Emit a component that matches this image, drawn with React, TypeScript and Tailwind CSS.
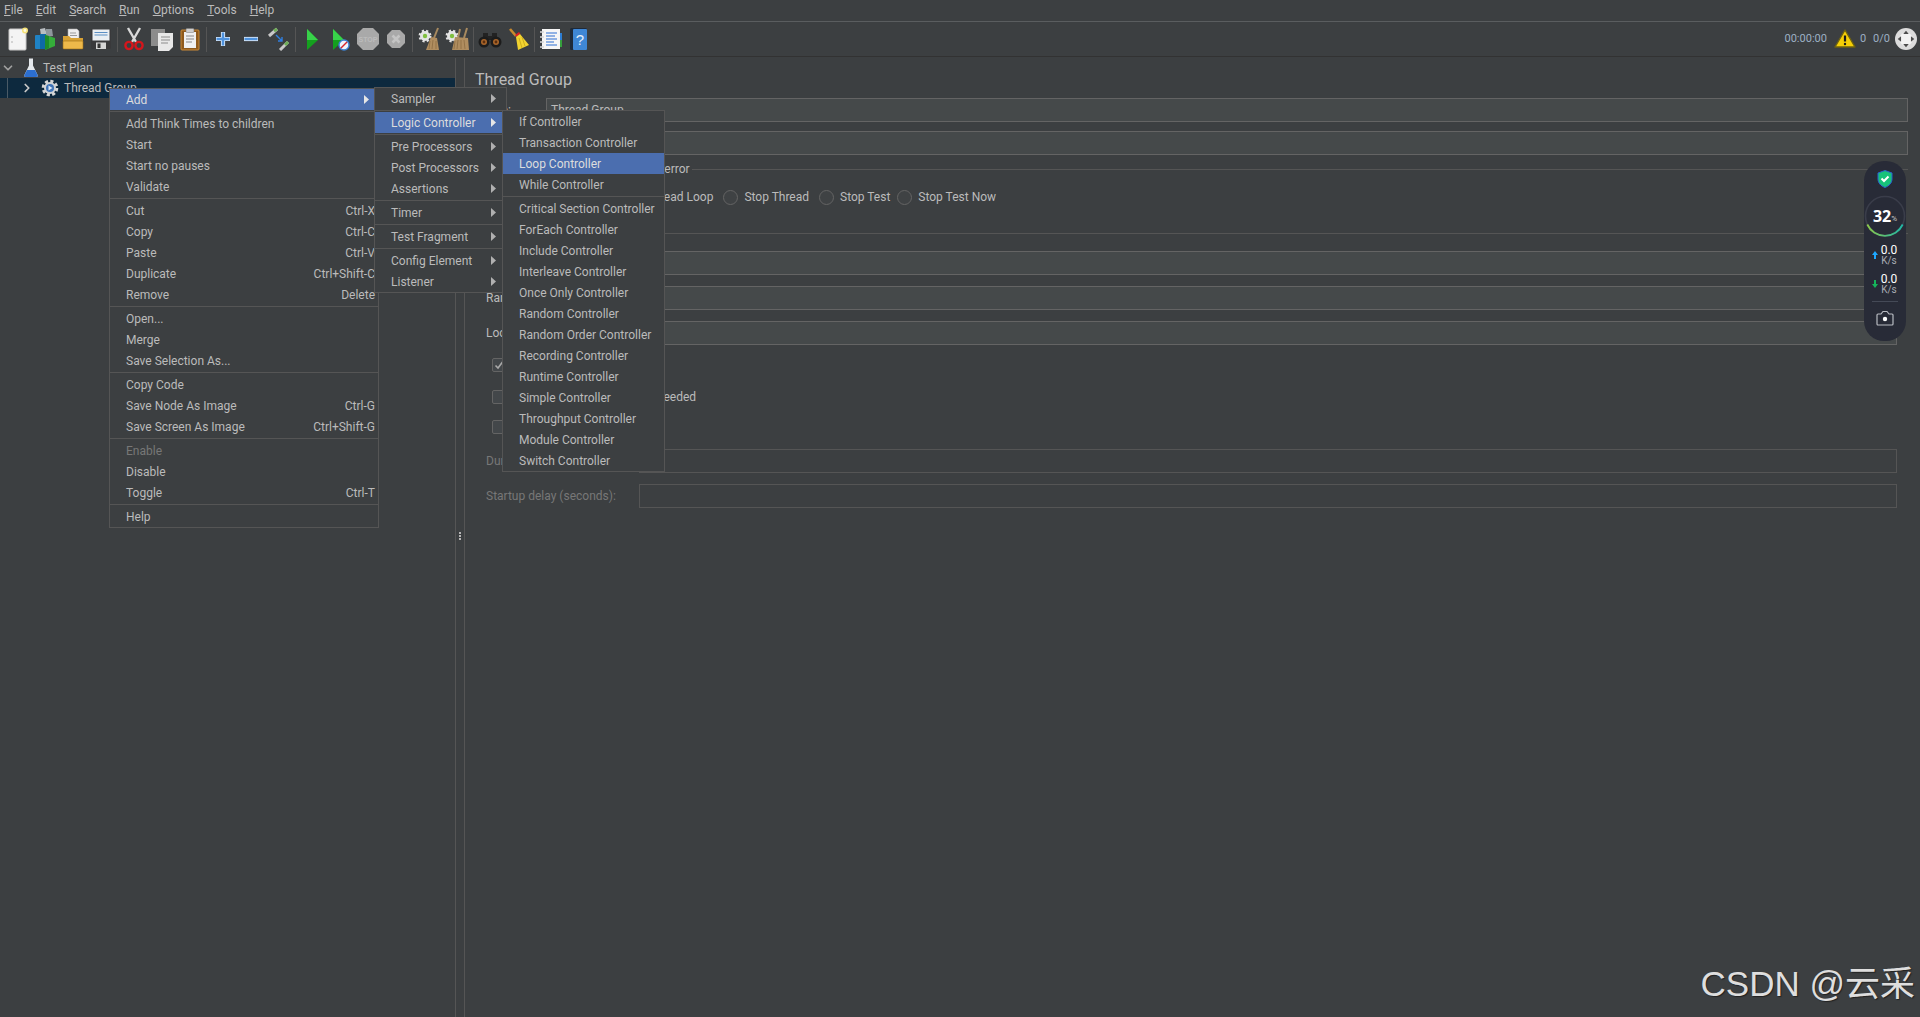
import React from 'react';
import { ChevronDown, ChevronRight } from 'lucide-react';

const NewIcon = () => (
  <svg width="24" height="24" viewBox="0 0 24 24">
    <rect x="4" y="2" width="17" height="21" rx="1" fill="#f4f4f4" stroke="#c9c9c9" />
    <circle cx="7" cy="10" r="0.7" fill="#999" />
    <circle cx="7" cy="15" r="0.7" fill="#999" />
    <circle cx="20" cy="3.5" r="3" fill="#f5e27a" />
    <circle cx="20" cy="3.5" r="1.4" fill="#fffbe0" />
  </svg>
);

const TemplatesIcon = () => (
  <svg width="24" height="24" viewBox="0 0 24 24">
    <path d="M7 2l5-1 2 7-6 1z" fill="#b9bec2" />
    <path d="M13 2l6 0 1 7-7 1z" fill="#8f979c" />
    <rect x="2" y="8" width="7" height="14" rx="1" fill="#1f82c4" />
    <rect x="7" y="7" width="6" height="15" fill="#0e6aa6" />
    <path d="M12 8l10 3v8l-10 4z" fill="#35ad3a" />
    <path d="M12 8l4 1v12l-4 2z" fill="#1e8c2a" />
  </svg>
);

const OpenIcon = () => (
  <svg width="24" height="24" viewBox="0 0 24 24">
    <path d="M7 2h9l2 2v9H7z" fill="#eee" stroke="#aaa" strokeWidth="0.6" />
    <path d="M9 6h6M9 8.5h7" stroke="#999" />
    <path d="M2 9h6l2 2h12v10a1 1 0 0 1-1 1H3a1 1 0 0 1-1-1z" fill="#d9a233" />
    <path d="M2 14h20v7a1 1 0 0 1-1 1H3a1 1 0 0 1-1-1z" fill="#eeb94a" stroke="#9a6d16" strokeWidth="0.6" />
  </svg>
);

const SaveIcon = () => (
  <svg width="24" height="24" viewBox="0 0 24 24">
    <rect x="2" y="2" width="20" height="20" rx="1.5" fill="#39393b" />
    <rect x="3.5" y="2.5" width="17" height="11" fill="#e9eef2" />
    <path d="M5.5 5.5h13M5.5 8h13" stroke="#5b8fc4" />
    <rect x="7" y="15.5" width="10" height="6.5" fill="#d6d6d6" />
    <rect x="8.5" y="16.5" width="3" height="4.5" fill="#333" />
  </svg>
);

const CutIcon = () => (
  <svg width="24" height="24" viewBox="0 0 24 24">
    <path d="M6 1l8 14M18 1l-8 14" stroke="#d9d9d9" strokeWidth="2.4" />
    <circle cx="7" cy="18.5" r="3.6" fill="none" stroke="#d4161c" strokeWidth="2.4" />
    <circle cx="17" cy="18.5" r="3.6" fill="none" stroke="#d4161c" strokeWidth="2.4" />
  </svg>
);

const CopyIcon = () => (
  <svg width="24" height="24" viewBox="0 0 24 24">
    <rect x="1" y="2" width="14" height="17" fill="#8c8c8c" />
    <path d="M8 6h15v14l-4 4H8z" fill="#e8e8e8" />
    <path d="M11 10h9M11 13h9M11 16h7" stroke="#8c8c8c" />
  </svg>
);

const PasteIcon = () => (
  <svg width="24" height="24" viewBox="0 0 24 24">
    <rect x="3" y="3" width="18" height="20" rx="1" fill="#8f5a1c" stroke="#c98a38" />
    <rect x="6" y="5" width="12" height="16" fill="#f0f0f0" />
    <rect x="8" y="1.5" width="8" height="4" rx="1" fill="#cfcfcf" stroke="#777" strokeWidth="0.5" />
    <path d="M8 9h8M8 12h8M8 15h6" stroke="#888" />
  </svg>
);

const PlusIcon = () => (
  <svg width="24" height="24" viewBox="0 0 24 24">
    <path d="M12 5v14M5 12h14" stroke="#d8e8f8" strokeWidth="4.2" />
    <path d="M12 5.5v13M5.5 12h13" stroke="#4f93de" strokeWidth="2.4" />
  </svg>
);

const MinusIcon = () => (
  <svg width="24" height="24" viewBox="0 0 24 24">
    <path d="M5 12h14" stroke="#d8e8f8" strokeWidth="4.2" />
    <path d="M5.5 12h13" stroke="#4f93de" strokeWidth="2.4" />
  </svg>
);

const ToggleIcon = () => (
  <svg width="24" height="24" viewBox="0 0 24 24">
    <path d="M2 9l8-7" stroke="#c9c9c9" strokeWidth="3" />
    <path d="M7 4l3-2" stroke="#6fae57" strokeWidth="3" />
    <path d="M13 23l8-8" stroke="#c9c9c9" strokeWidth="3" />
    <path d="M18 18l3-3" stroke="#6fae57" strokeWidth="3" />
    <path d="M9 8l6 6M15 10v4h-4" stroke="#2f7fe0" strokeWidth="1.4" fill="none" />
  </svg>
);

const StartIcon = () => (
  <svg width="24" height="24" viewBox="0 0 24 24">
    <path d="M7 2l11 11-11 10z" fill="#14a01e" />
    <path d="M7 2l11 11H7z" fill="#38d24a" />
  </svg>
);

const StartNoPauseIcon = () => (
  <svg width="24" height="24" viewBox="0 0 24 24">
    <path d="M5 2l11 11-11 10z" fill="#14a01e" />
    <path d="M5 2l11 11H5z" fill="#38d24a" />
    <circle cx="16" cy="18" r="5" fill="#eef4fb" stroke="#3c83d6" strokeWidth="1.4" />
    <path d="M13 21l6-6" stroke="#d6262c" strokeWidth="1.4" />
  </svg>
);

const StopIcon = () => (
  <svg width="24" height="24" viewBox="0 0 24 24">
    <path d="M7 1h10l6 6v10l-6 6H7l-6-6V7z" fill="#a9a9a9" />
    <text x="12" y="14.5" textAnchor="middle" fontSize="7" fontWeight="700" fill="#bcbcbc" fontFamily="Liberation Sans, sans-serif">STOP</text>
  </svg>
);

const ShutdownIcon = () => (
  <svg width="24" height="24" viewBox="0 0 24 24">
    <path d="M8 3h8l5 5v8l-5 5H8l-5-5V8z" fill="#a9a9a9" />
    <path d="M8.5 8.5l7 7M15.5 8.5l-7 7" stroke="#c4c4c4" strokeWidth="2.6" />
  </svg>
);

const ClearIcon = () => (
  <svg width="24" height="24" viewBox="0 0 24 24">
    <circle cx="8" cy="9" r="5" fill="#e4e4e4" stroke="#e4e4e4" strokeWidth="3" strokeDasharray="2 2" />
    <circle cx="8" cy="9" r="2.2" fill="#7fbf3f" />
    <path d="M21 1l-4 10" stroke="#a88a5f" strokeWidth="2" />
    <path d="M14 10l6 1 2 12H9z" fill="#b08d5f" />
    <path d="M13 14l-1 8M16 13l-1 9M19 14l0 8" stroke="#86673e" strokeWidth="0.7" />
  </svg>
);

const ClearAllIcon = () => (
  <svg width="24" height="24" viewBox="0 0 24 24">
    <circle cx="7" cy="9" r="5" fill="#e4e4e4" stroke="#e4e4e4" strokeWidth="3" strokeDasharray="2 2" />
    <circle cx="7" cy="9" r="2.2" fill="#7fbf3f" />
    <path d="M15 2l-2 9M22 1l-3 10" stroke="#a88a5f" strokeWidth="2" />
    <path d="M10 10l13 1 1 12H7z" fill="#b08d5f" />
    <path d="M10 14l-1 8M13 13l-1 9M16 13v9M19 13l1 9" stroke="#86673e" strokeWidth="0.7" />
  </svg>
);

const BinocularsIcon = () => (
  <svg width="24" height="24" viewBox="0 0 24 24">
    <path d="M5 6h5v6H5zM14 6h5v6h-5zM10 9h4v4h-4z" fill="#222" />
    <circle cx="6" cy="15" r="5.5" fill="#1c1c1c" />
    <circle cx="18" cy="15" r="5.5" fill="#1c1c1c" />
    <circle cx="6" cy="15" r="3" fill="#a8652a" />
    <circle cx="18" cy="15" r="3" fill="#a8652a" />
    <circle cx="6" cy="15" r="1.4" fill="#5a2f10" />
    <circle cx="18" cy="15" r="1.4" fill="#5a2f10" />
  </svg>
);

const BroomIcon = () => (
  <svg width="24" height="24" viewBox="0 0 24 24">
    <path d="M4 2l6 7" stroke="#c98a2e" strokeWidth="2.6" />
    <path d="M9 8l4-3 1.5 2-4 3z" fill="#d81f26" />
    <path d="M10 10l4-3 9 11-11 5z" fill="#f1d330" />
    <path d="M13 11l3 10M16 10l3 9" stroke="#c4a418" strokeWidth="0.8" />
  </svg>
);

const LogIcon = () => (
  <svg width="24" height="24" viewBox="0 0 24 24">
    <rect x="20" y="6" width="3" height="14" fill="#2d7dd2" />
    <rect x="20" y="13" width="3" height="7" fill="#35a03d" />
    <rect x="3" y="2" width="18" height="20" fill="#f6f6f6" />
    <path d="M7 6h11M7 9h9M7 12h11M7 15h8M7 18h11" stroke="#2d6fd2" strokeWidth="1.2" />
    <path d="M1 5h4M1 10h4M1 15h4M1 20h4" stroke="#d8d8d8" strokeWidth="1.6" />
  </svg>
);

const HelpIcon = () => (
  <svg width="24" height="24" viewBox="0 0 24 24">
    <rect x="3" y="1" width="17" height="22" rx="1.5" fill="#1e2a3a" />
    <rect x="6" y="2" width="14" height="21" rx="1" fill="#3f87d6" />
    <text x="13" y="18" textAnchor="middle" fontSize="15" fill="#e6f0fb" fontFamily="Liberation Sans, sans-serif">?</text>
  </svg>
);

const FlaskIcon = () => (
  <svg width="16" height="20" viewBox="0 0 16 20">
    <path d="M6 0.5h4v7l4.6 9.5a1.5 1.5 0 0 1-1.4 2H2.8A1.5 1.5 0 0 1 1.4 17L6 7.5z" fill="#e4e8ec" />
    <path d="M4 12h8l2.6 5a1.5 1.5 0 0 1-1.4 2H2.8A1.5 1.5 0 0 1 1.4 17z" fill="#2c6fd0" />
  </svg>
);

const GearIcon = () => (
  <svg width="20" height="20" viewBox="0 0 20 20">
    <circle cx="10" cy="10" r="6.6" fill="none" stroke="#d6d6d6" strokeWidth="3.4" strokeDasharray="3 2.2" />
    <circle cx="10" cy="10" r="6" fill="#cfd3d6" />
    <circle cx="10" cy="10" r="4" fill="#3f74b8" />
    <path d="M8.5 7.5l4 2.5-4 2.5z" fill="#dbe8f6" />
  </svg>
);

const WarningIcon = () => (
  <svg width="22" height="20" viewBox="0 0 22 20">
    <path d="M11 1l10 17H1z" fill="#f6cf06" stroke="#6e6210" strokeWidth="1.4" strokeLinejoin="round" />
    <path d="M11 6.5v6" stroke="#1c1c1c" strokeWidth="2.2" />
    <circle cx="11" cy="15" r="1.2" fill="#1c1c1c" />
  </svg>
);

const GlobeIcon = () => (
  <svg width="22" height="22" viewBox="0 0 20 20">
    <circle cx="10" cy="10" r="10" fill="#dcdcdc" />
    <circle cx="10" cy="10" r="6" fill="#f2f2f2" />
    <path d="M10 2.5l2.5 3h-5zM10 17.5l2.5-3h-5zM2.5 10l3-2.5v5zM17.5 10l-3-2.5v5z" fill="#4c4c4c" />
  </svg>
);

const ArrowRight = ({ active }: { active?: boolean }) => (
  <svg width="5" height="9" viewBox="0 0 5 9">
    <path d="M0 0l5 4.5L0 9z" fill={active ? '#e6e6e6' : '#b0b0b0'} />
  </svg>
);

const toolbarGroups = [
  [NewIcon, TemplatesIcon, OpenIcon, SaveIcon],
  [CutIcon, CopyIcon, PasteIcon],
  [PlusIcon, MinusIcon, ToggleIcon],
  [StartIcon, StartNoPauseIcon, StopIcon, ShutdownIcon],
  [ClearIcon, ClearAllIcon],
  [BinocularsIcon, BroomIcon],
  [LogIcon, HelpIcon]
];

const menuBar = [
  { key: 'F', rest: 'ile' },
  { key: 'E', rest: 'dit' },
  { key: 'S', rest: 'earch' },
  { key: 'R', rest: 'un' },
  { key: 'O', rest: 'ptions' },
  { key: 'T', rest: 'ools' },
  { key: 'H', rest: 'elp' }
];

type Item = { label: string; shortcut?: string; arrow?: boolean; active?: boolean; disabled?: boolean };

const mainMenu: Item[][] = [
  [{ label: 'Add', arrow: true, active: true }],
  [{ label: 'Add Think Times to children' }, { label: 'Start' }, { label: 'Start no pauses' }, { label: 'Validate' }],
  [
    { label: 'Cut', shortcut: 'Ctrl-X' },
    { label: 'Copy', shortcut: 'Ctrl-C' },
    { label: 'Paste', shortcut: 'Ctrl-V' },
    { label: 'Duplicate', shortcut: 'Ctrl+Shift-C' },
    { label: 'Remove', shortcut: 'Delete' }
  ],
  [{ label: 'Open...' }, { label: 'Merge' }, { label: 'Save Selection As...' }],
  [{ label: 'Copy Code' }, { label: 'Save Node As Image', shortcut: 'Ctrl-G' }, { label: 'Save Screen As Image', shortcut: 'Ctrl+Shift-G' }],
  [{ label: 'Enable', disabled: true }, { label: 'Disable' }, { label: 'Toggle', shortcut: 'Ctrl-T' }],
  [{ label: 'Help' }]
];

const addMenu: Item[][] = [
  [{ label: 'Sampler', arrow: true }],
  [{ label: 'Logic Controller', arrow: true, active: true }],
  [{ label: 'Pre Processors', arrow: true }, { label: 'Post Processors', arrow: true }, { label: 'Assertions', arrow: true }],
  [{ label: 'Timer', arrow: true }],
  [{ label: 'Test Fragment', arrow: true }],
  [{ label: 'Config Element', arrow: true }, { label: 'Listener', arrow: true }]
];

const logicMenu: Item[][] = [
  [{ label: 'If Controller' }, { label: 'Transaction Controller' }, { label: 'Loop Controller', active: true }, { label: 'While Controller' }],
  [
    { label: 'Critical Section Controller' },
    { label: 'ForEach Controller' },
    { label: 'Include Controller' },
    { label: 'Interleave Controller' },
    { label: 'Once Only Controller' },
    { label: 'Random Controller' },
    { label: 'Random Order Controller' },
    { label: 'Recording Controller' },
    { label: 'Runtime Controller' },
    { label: 'Simple Controller' },
    { label: 'Throughput Controller' },
    { label: 'Module Controller' },
    { label: 'Switch Controller' }
  ]
];

function Menu({ groups, className }: { groups: Item[][]; className: string }) {
  return (
    <div className={`absolute bg-[#3c3f41] border border-[#555] ${className}`}>
      {groups.map((group, i) => (
        <div key={i}>
          {i > 0 && <div className="h-px my-px bg-[#555]" />}
          {group.map((item) => (
            <div
              key={item.label}
              className={`h-[21px] flex items-center justify-between ${
                item.active ? 'bg-[#4b6eaf] text-[#dddddd]' : item.disabled ? 'text-[#777777]' : ''
              }`}
            >
              <span className="whitespace-nowrap">{item.label}</span>
              {item.shortcut && <span className="whitespace-nowrap">{item.shortcut}</span>}
              {item.arrow && (
                <span>
                  <ArrowRight active={item.active} />
                </span>
              )}
            </div>
          ))}
        </div>
      ))}
    </div>
  );
}

function Field({ className = '', disabled }: { className?: string; disabled?: boolean }) {
  return (
    <div className={`h-[24px] border ${disabled ? 'border-[#555]' : 'border-[#646464] bg-[#45494a]'} ${className}`} />
  );
}

function Radio({ label, className = '' }: { label: string; className?: string }) {
  return (
    <div className={`flex items-center gap-[6px] ${className}`}>
      <span className="w-[15px] h-[15px] rounded-full border border-[#646464] bg-[#3f4244]" />
      <span>{label}</span>
    </div>
  );
}

function CheckRow({ label, checked, className = '' }: { label: string; checked?: boolean; className?: string }) {
  return (
    <div className={`flex items-center gap-[6px] h-[16px] ${className}`}>
      <span className="w-[14px] h-[14px] rounded-[2px] border border-[#646464] bg-[#43474a] flex items-center justify-center">
        {checked && (
          <svg width="10" height="10" viewBox="0 0 10 10">
            <path d="M1.5 5.5l2.5 2.5 4.5-6" fill="none" stroke="#a9a9a9" strokeWidth="1.6" />
          </svg>
        )}
      </span>
      <span>{label}</span>
    </div>
  );
}

function App() {
  return (
    <div className="relative h-screen overflow-hidden flex flex-col bg-[#3c3f41] text-[#bbbbbb] text-[12px] [font-family:Roboto,sans-serif]">
      {/* Menu bar */}
      <div className="h-[22px] shrink-0 flex items-center gap-[13px] pl-[4px] border-b border-[#5a5d5f] pb-px">
        {menuBar.map((m) => (
          <span key={m.key}>
            <span className="underline">{m.key}</span>
            {m.rest}
          </span>
        ))}
      </div>

      {/* Toolbar */}
      <div className="h-[35px] shrink-0 flex items-center pl-[3px] border-b border-[#323232]">
        {toolbarGroups.map((group, i) => (
          <React.Fragment key={i}>
            {i > 0 && (
              <div className="w-[5px] h-[25px] flex justify-center">
                <div className="w-px h-full bg-[#555]" />
              </div>
            )}
            {group.map((Icon, j) => (
              <div key={j} className="w-[28px] h-[28px] flex items-center justify-center">
                <Icon />
              </div>
            ))}
          </React.Fragment>
        ))}
        <div className="ml-auto flex items-center pr-[3px] text-[11px] text-[#9db0c4]">
          <span>00:00:00</span>
          <span className="ml-[7px]">
            <WarningIcon />
          </span>
          <span className="ml-[4px]">0</span>
          <span className="ml-[7px]">0/0</span>
          <span className="ml-[5px]">
            <GlobeIcon />
          </span>
        </div>
      </div>

      {/* Body */}
      <div className="flex-1 flex min-h-0">
        <div className="w-[455px] shrink-0 flex flex-col">
          <div className="h-[20px] mt-px flex items-center">
            <ChevronDown className="w-[14px] h-[14px] ml-px text-[#a0a0a0]" strokeWidth={3} />
            <span className="ml-[8px]">
              <FlaskIcon />
            </span>
            <span className="ml-[4px]">Test Plan</span>
          </div>
          <div className="h-[20px] flex items-center bg-[#0d293e]">
            <div className="w-px h-full bg-[#4a5a66] ml-[7px]" />
            <ChevronRight className="w-[14px] h-[14px] ml-[12px] text-[#c8c8c8]" strokeWidth={3} />
            <span className="ml-[6px]">
              <GearIcon />
            </span>
            <span className="ml-[4px]">Thread Group</span>
          </div>
        </div>

        {/* Splitter */}
        <div className="w-[10px] shrink-0 border-x border-[#555] flex flex-col items-center justify-center gap-[1px] pb-[4px] mt-px">
          <span className="w-[2px] h-[2px] bg-[#b5b5b5]" />
          <span className="w-[2px] h-[2px] bg-[#b5b5b5]" />
          <span className="w-[2px] h-[2px] bg-[#b5b5b5]" />
        </div>

        {/* Thread Group panel */}
        <div className="flex-1 pl-[10px] pr-[12px]">
          <div className="mt-[11px] h-[24px] flex items-center text-[16px]">Thread Group</div>
          <div className="mt-[6px] flex items-center">
            <span className="w-[71px] pl-px">Name:</span>
            <div className="flex-1 h-[24px] border border-[#646464] bg-[#45494a] pl-[4px] flex items-center">Thread Group</div>
          </div>
          <div className="mt-[9px] flex items-center">
            <span className="w-[71px] pl-px">Comments:</span>
            <Field className="flex-1" />
          </div>

          <div className="mt-[6px] flex items-center h-[16px]">
            <div className="w-[3px] h-px bg-[#555]" />
            <span className="mx-[2px]">Action to be taken after a Sampler error</span>
            <div className="flex-1 h-px bg-[#555]" />
          </div>
          <div className="mt-[11px] h-[18px] flex items-center pl-[15px]">
            <Radio label="Continue" />
            <Radio label="Start Next Thread Loop" className="ml-[10px]" />
            <Radio label="Stop Thread" className="ml-[10px]" />
            <Radio label="Stop Test" className="ml-[10px]" />
            <Radio label="Stop Test Now" className="ml-[7px]" />
          </div>

          <div className="mt-[19px] flex items-center h-[16px]">
            <div className="w-[8px] h-px bg-[#555]" />
            <span className="mx-[2px]">Thread Properties</span>
            <div className="flex-1 h-px bg-[#555]" />
          </div>

          <div className="pl-[11px] pr-[11px]">
            <div className="mt-[10px] flex items-center">
              <span className="w-[153px]">Number of Threads (users):</span>
              <Field className="flex-1" />
            </div>
            <div className="mt-[11px] flex items-center">
              <span className="w-[153px]">Ramp-up period (seconds):</span>
              <Field className="flex-1" />
            </div>
            <div className="mt-[11px] flex items-center">
              <span className="w-[153px]">Loop Count:</span>
              <Field className="flex-1" />
            </div>
            <div className="pl-[6px]">
              <CheckRow label="Same user on each iteration" checked className="mt-[12px]" />
              <CheckRow label="Delay Thread creation until needed" className="mt-[16px]" />
              <CheckRow label="Specify Thread lifetime" className="mt-[14px]" />
            </div>
            <div className="mt-[14px] flex items-center text-[#777777]">
              <span className="w-[153px]">Duration (seconds):</span>
              <Field disabled className="flex-1" />
            </div>
            <div className="mt-[11px] flex items-center text-[#777777]">
              <span className="w-[153px]">Startup delay (seconds):</span>
              <Field disabled className="flex-1" />
            </div>
          </div>
        </div>
      </div>

      {/* Context menus */}
      <Menu
        groups={mainMenu}
        className="left-[109px] top-[88px] w-[270px] [&>div>div:not(.h-px)]:pl-[16px] [&>div>div:not(.h-px)]:pr-[3px] [&_span:has(svg)]:mr-[6px]"
      />
      <Menu
        groups={addMenu}
        className="left-[374px] top-[87px] w-[133px] [&>div>div:not(.h-px)]:pl-[16px] [&_span:has(svg)]:mr-[10px]"
      />
      <Menu
        groups={logicMenu}
        className="left-[502px] top-[110px] w-[163px] [&>div>div:not(.h-px)]:pl-[16px]"
      />

      {/* Floating network monitor */}
      <div className="absolute left-[1864px] top-[161px] w-[42px] h-[180px] rounded-[20px] bg-[#282b37] flex flex-col items-center text-white">
        <svg className="mt-[9px]" width="16" height="18" viewBox="0 0 16 18">
          <path d="M8 0.5l7 2.5v6c0 4-3 7-7 8.5C4 16 1 13 1 9V3z" fill="#17c27a" stroke="#2b62d0" strokeWidth="1" />
          <path d="M4.5 8.5l2.5 2.5 4.5-4.5" fill="none" stroke="#fff" strokeWidth="2" />
        </svg>
        <div className="relative w-[42px] h-[42px] mt-[7px] flex items-center justify-center">
          <svg className="absolute inset-0" width="42" height="42" viewBox="0 0 42 42">
            <defs>
              <linearGradient id="gauge" x1="0" x2="1" y1="0" y2="0">
                <stop offset="0" stopColor="#8cc84b" />
                <stop offset="1" stopColor="#1fb6a6" />
              </linearGradient>
            </defs>
            <circle cx="21" cy="21" r="19.5" fill="none" stroke="#3a3d4a" strokeWidth="1.6" />
            <path d="M3.3 29.5 A19.5 19.5 0 0 0 38.7 29.5" fill="none" stroke="url(#gauge)" strokeWidth="1.8" />
          </svg>
          <span className="text-[16px] font-bold leading-none [font-family:'Open_Sans',sans-serif]">32</span>
          <span className="text-[8px] text-[#c8c8c8] mt-[5px]">%</span>
        </div>
        <div className="mt-[7px] flex items-start gap-[3px] pr-[1px] leading-none">
          <svg className="mt-[7px]" width="6" height="8" viewBox="0 0 6 8">
            <path d="M3 0l3 4H4v4H2V4H0z" fill="#1ea7ff" />
          </svg>
          <div className="flex flex-col items-center">
            <span className="text-[12px]">0.0</span>
            <span className="text-[10px] text-[#a8abb3]">K/s</span>
          </div>
        </div>
        <div className="mt-[7px] flex items-start gap-[3px] pr-[1px] leading-none">
          <svg className="mt-[7px]" width="6" height="8" viewBox="0 0 6 8">
            <path d="M3 8L0 4h2V0h2v4h2z" fill="#15b45a" />
          </svg>
          <div className="flex flex-col items-center">
            <span className="text-[12px]">0.0</span>
            <span className="text-[10px] text-[#a8abb3]">K/s</span>
          </div>
        </div>
        <div className="w-[26px] h-px bg-[#454a57] mt-[6px]" />
        <svg className="mt-[8px]" width="18" height="16" viewBox="0 0 18 16">
          <path d="M1 5a1 1 0 0 1 1-1h3l2-2.5h4L13 4h3a1 1 0 0 1 1 1v9a1 1 0 0 1-1 1H2a1 1 0 0 1-1-1z" fill="none" stroke="#b8bbc2" strokeWidth="1.2" />
          <circle cx="9" cy="9" r="2.2" fill="#fff" />
        </svg>
      </div>

      {/* Watermark */}
      <div className="absolute right-[5px] bottom-[16px] text-[35px] leading-none text-[#dedede] [text-shadow:1px_1px_1px_#222] [font-family:'Liberation_Sans','Noto_Sans_CJK_SC',sans-serif]">
        CSDN @云采
      </div>
    </div>
  );
}

export default App;
